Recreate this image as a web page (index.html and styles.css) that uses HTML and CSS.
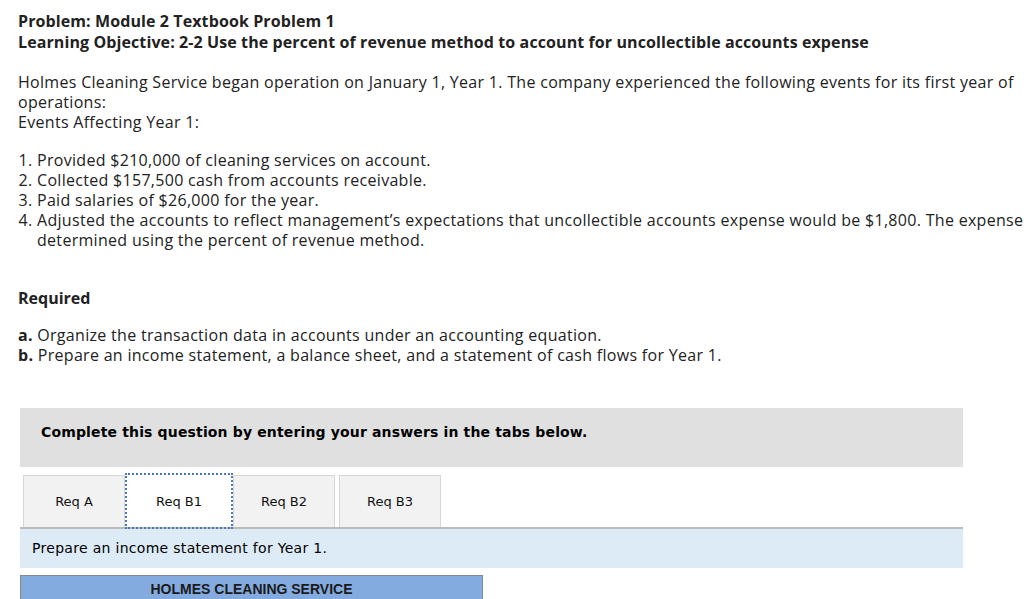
FILE: index.html
```html
<!DOCTYPE html>
<html>
<head>
<meta charset="utf-8">
<link rel="stylesheet" href="styles.css">
</head>
<body>
<div class="page">
  <div class="head">
    <div>Problem: Module 2 Textbook Problem 1</div>
    <div>Learning Objective: 2-2 Use the percent of revenue method to account for uncollectible accounts expense</div>
  </div>
  <p class="intro">Holmes Cleaning Service began operation on January 1, Year 1. The company experienced the following events for its first year of operations:<br>Events Affecting Year 1:</p>
  <ol class="events">
    <li>Provided $210,000 of cleaning services on account.</li>
    <li>Collected $157,500 cash from accounts receivable.</li>
    <li>Paid salaries of $26,000 for the year.</li>
    <li>Adjusted the accounts to reflect management’s expectations that uncollectible accounts expense would be $1,800. The expense was determined using the percent of revenue method.</li>
  </ol>
  <div class="req-title">Required</div>
  <div class="req-list">
    <div><b>a.</b> Organize the transaction data in accounts under an accounting equation.</div>
    <div><b>b.</b> Prepare an income statement, a balance sheet, and a statement of cash flows for Year 1.</div>
  </div>
  <div class="question">
    <div class="banner">Complete this question by entering your answers in the tabs below.</div>
    <div class="tabs">
      <div class="tab">Req A</div>
      <div class="tab active">Req B1</div>
      <div class="tab">Req B2</div>
      <div class="tab">Req B3</div>
    </div>
    <div class="instruction">Prepare an income statement for Year 1.</div>
    <div class="statement">
      <div class="st-head">HOLMES CLEANING SERVICE</div>
    </div>
  </div>
</div>
</body>
</html>
```

FILE: styles.css
```css
html, body {
  margin: 0;
  padding: 0;
  background: #fff;
  overflow: hidden;
}
.page {
  width: 1040px;
  padding: 11px 0 0 18px;
  font-family: "Open Sans", "Liberation Sans", Arial, sans-serif;
  font-size: 16px;
  letter-spacing: 0.3px;
  line-height: 20px;
  color: #222;
}
.head {
  font-weight: bold;
  font-size: 16px;
  letter-spacing: 0.1px;
  line-height: 21px;
}
.intro {
  margin: 19px 0 0;
}
.events {
  margin: 18px 0 0;
  padding-left: 19px;
}
.req-title {
  margin-top: 38px;
  font-weight: bold;
  letter-spacing: 0;
}
.req-list {
  margin-top: 17px;
}
.question {
  margin-top: 43px;
  margin-left: 2px;
  width: 943px;
  font-family: "DejaVu Sans", Verdana, sans-serif;
  letter-spacing: 0;
  color: #000;
}
.banner {
  background: #e0e0e0;
  height: 59px;
  box-sizing: border-box;
  padding: 16px 0 0 21px;
  font-size: 14px;
  letter-spacing: 0.15px;
  font-weight: bold;
  line-height: 17px;
}
.tabs {
  display: flex;
  gap: 2px;
  margin-top: 8px;
  padding-left: 3px;
  border-bottom: 2px solid #bbb;
}
.tab {
  width: 102px;
  height: 52px;
  box-sizing: border-box;
  background: #f2f2f2;
  border: 1px solid #d6d6d6;
  border-bottom: none;
  display: flex;
  align-items: center;
  justify-content: center;
  font-size: 13px;
  color: #111;
}
.tab.active {
  background: #fff;
  width: 104px;
  border-color: #fff;
  outline: 2px dotted #4a78c0;
  outline-offset: 0;
}
.tab:last-child {
  margin-left: 2px;
}
.instruction {
  background: #ddebf7;
  height: 39px;
  box-sizing: border-box;
  padding: 11px 0 0 12px;
  font-size: 14px;
  letter-spacing: 0.3px;
  line-height: 17px;
}
.statement {
  margin-top: 7px;
  width: 461px;
  border: 1px solid #888;
  border-bottom: none;
  background: #84abe0;
}
.st-head {
  text-align: center;
  font-family: "Liberation Sans", Arial, sans-serif;
  font-weight: bold;
  font-size: 14px;
  line-height: 16px;
  padding-top: 5px;
  height: 30px;
  color: #1a1a1a;
}
```
